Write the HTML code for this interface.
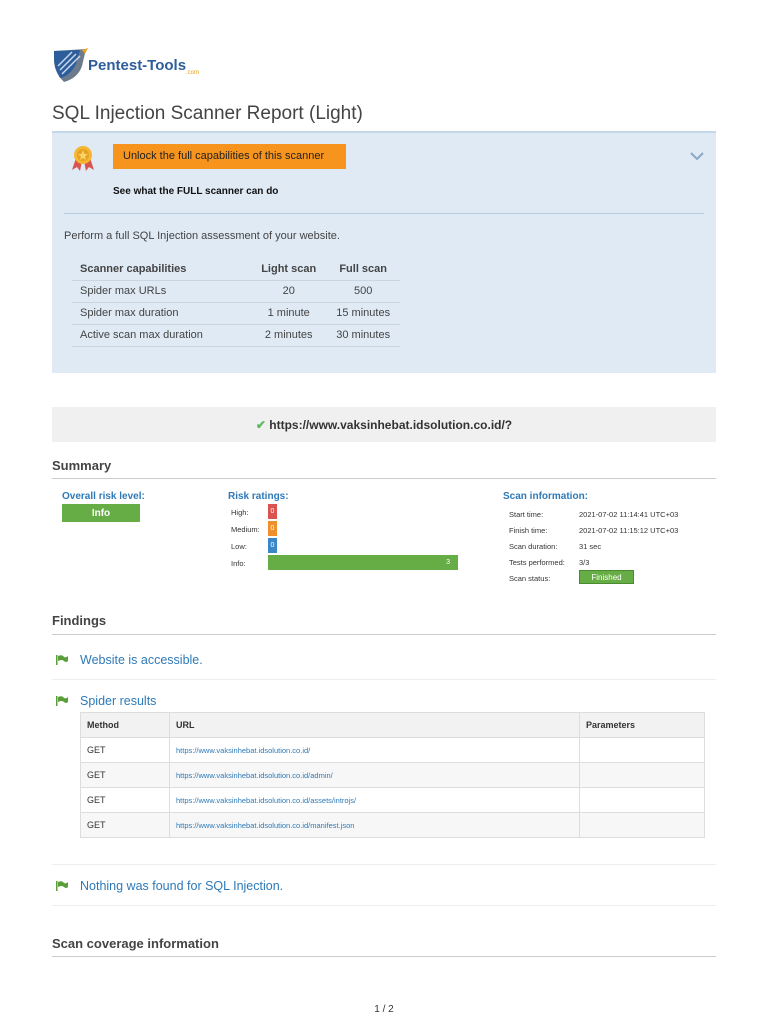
<!DOCTYPE html>
<html><head><meta charset="utf-8"><style>
*{margin:0;padding:0;box-sizing:border-box}
body{width:768px;height:1024px;background:#fff;font-family:"Liberation Sans",sans-serif;color:#333;position:relative;overflow:hidden}
.a{position:absolute}
.blue{color:#2e7ab8}
table{border-collapse:collapse}
.cap td{font-size:11px;color:#444;height:22px;border-bottom:1px solid #c9d6e2;padding:0 0 0 0}
.sp td{border:1px solid #ddd;font-size:9px;height:25px;padding:0 6px}
.sp a{color:#2e7ab8;font-size:7.5px;text-decoration:none}
.h2{font-size:13px;font-weight:bold;color:#444}
.line{height:1px;background:#ccc}
.flag{width:12px;height:10px}
.si div{font-size:7.5px;height:16px;line-height:16px}
.bd{width:9px;height:15px;color:#fff;font-size:7px;line-height:15px;text-align:center}
</style></head><body>
<svg class="a" style="left:52px;top:48px" width="36" height="36" viewBox="0 0 36 36"><path d="M2 3 L34 1 L30 18 Q26 30 12 34 Q2 24 2 12Z" fill="#6b7b8c"/><path d="M2 3 L28 2 L24 16 Q18 28 8 30 Q2 20 2 10Z" fill="#2d5d9a"/><path d="M8 22 L24 6 M10 26 L28 8 M6 18 L20 4" stroke="#c8d8ec" stroke-width="1.5"/><path d="M30 2 L36 0 L33 6Z" fill="#e8a020"/></svg>
<div class="a" style="left:88px;top:57px;font-size:15px;font-weight:bold;color:#2d5d9a">Pentest-Tools</div>
<div class="a" style="left:186px;top:70px;font-size:6px;color:#e8a020">.com</div>
<div class="a" style="left:52px;top:103px;font-size:19px;color:#444">SQL Injection Scanner Report (Light)</div>
<div class="a" style="left:52px;top:131px;width:664px;height:242px;background:#dfeaf5;border-top:2px solid #c4d8ea"></div>
<svg class="a" style="left:70px;top:144px" width="26" height="28" viewBox="0 0 26 28"><path d="M6 14 L2 26 L7 23 L10 27 L12 17Z M20 14 L24 26 L19 23 L16 27 L14 17Z" fill="#d9534f"/><circle cx="13" cy="11" r="9" fill="#f5b731"/><circle cx="13" cy="11" r="6" fill="#e8a020"/><path d="M13 6 L14.5 10 L18 10 L15 12.5 L16 16 L13 14 L10 16 L11 12.5 L8 10 L11.5 10Z" fill="#f7d56a"/></svg>
<div class="a" style="left:113px;top:144px;width:233px;height:25px;background:#f6941d;font-size:11px;color:#222;line-height:25px;padding-left:10px">Unlock the full capabilities of this scanner</div>
<div class="a" style="left:113px;top:186px;font-size:10px;font-weight:bold;color:#111">See what the FULL scanner can do</div>
<svg class="a" style="left:690px;top:151px" width="14" height="10"><path d="M1 2 L7 8 L13 2" stroke="#8aa8c4" stroke-width="2" fill="none"/></svg>
<div class="a" style="left:64px;top:213px;width:640px;height:1px;background:#b8cde0"></div>
<div class="a" style="left:64px;top:230px;font-size:11px;color:#444">Perform a full SQL Injection assessment of your website.</div>
<table class="a cap" style="left:72px;top:258px;width:328px">
<tr><td style="font-weight:bold;padding-left:8px">Scanner capabilities</td><td style="font-weight:bold;text-align:center">Light scan</td><td style="font-weight:bold;text-align:center">Full scan</td></tr>
<tr><td style="padding-left:8px">Spider max URLs</td><td style="text-align:center">20</td><td style="text-align:center">500</td></tr>
<tr><td style="padding-left:8px">Spider max duration</td><td style="text-align:center">1 minute</td><td style="text-align:center">15 minutes</td></tr>
<tr><td style="padding-left:8px">Active scan max duration</td><td style="text-align:center">2 minutes</td><td style="text-align:center">30 minutes</td></tr>
</table>
<div class="a" style="left:52px;top:407px;width:664px;height:35px;background:#f0f0f0;text-align:center;line-height:37px;font-size:12px;font-weight:bold;color:#333"><span style="color:#5cb85c">✔</span> https://www.vaksinhebat.idsolution.co.id/?</div>
<div class="a h2" style="left:52px;top:458px">Summary</div>
<div class="a line" style="left:52px;top:478px;width:664px"></div>
<div class="a blue" style="left:62px;top:491px;font-size:10px;font-weight:bold">Overall risk level:</div>
<div class="a" style="left:62px;top:504px;width:78px;height:18px;background:#67ad45;color:#fff;font-size:10px;font-weight:bold;text-align:center;line-height:19px">Info</div>
<div class="a blue" style="left:228px;top:491px;font-size:10px;font-weight:bold">Risk ratings:</div>
<div class="a" style="left:231px;top:508px;font-size:7.5px">High:</div>
<div class="a" style="left:231px;top:525px;font-size:7.5px">Medium:</div>
<div class="a" style="left:231px;top:542px;font-size:7.5px">Low:</div>
<div class="a" style="left:231px;top:559px;font-size:7.5px">Info:</div>
<div class="a bd" style="left:268px;top:504px;background:#d9534f">0</div>
<div class="a bd" style="left:268px;top:521px;background:#f0902a">0</div>
<div class="a bd" style="left:268px;top:538px;background:#3a87c8">0</div>
<div class="a" style="left:268px;top:555px;width:190px;height:15px;background:#67ad45;color:#fff;font-size:7px;line-height:15px;padding:0 8px;text-align:right">3</div>
<div class="a blue" style="left:503px;top:491px;font-size:10px;font-weight:bold">Scan information:</div>
<div class="a si" style="left:509px;top:507px"><div>Start time:</div><div>Finish time:</div><div>Scan duration:</div><div>Tests performed:</div><div>Scan status:</div></div>
<div class="a si" style="left:579px;top:507px"><div>2021-07-02 11:14:41 UTC+03</div><div>2021-07-02 11:15:12 UTC+03</div><div>31 sec</div><div>3/3</div></div>
<div class="a" style="left:579px;top:570px;width:55px;height:14px;background:#67ad45;border:1px solid #4a8a30;color:#fff;font-size:8px;text-align:center;line-height:13px">Finished</div>
<div class="a h2" style="left:52px;top:613px">Findings</div>
<div class="a line" style="left:52px;top:634px;width:664px"></div>
<svg class="a flag" style="left:56px;top:655px" viewBox="0 0 12 10"><rect x="0" y="0" width="1.5" height="10" fill="#5a9e3a"/><path d="M2 1 Q6 -1 8 2 Q10 3 12 1 L12 6 Q10 8 8 6 Q6 4 2 6Z" fill="#5a9e3a"/></svg>
<div class="a blue" style="left:80px;top:653px;font-size:12.5px">Website is accessible.</div>
<div class="a" style="left:52px;top:679px;width:664px;height:1px;background:#eee"></div>
<svg class="a flag" style="left:56px;top:696px" viewBox="0 0 12 10"><rect x="0" y="0" width="1.5" height="10" fill="#5a9e3a"/><path d="M2 1 Q6 -1 8 2 Q10 3 12 1 L12 6 Q10 8 8 6 Q6 4 2 6Z" fill="#5a9e3a"/></svg>
<div class="a blue" style="left:80px;top:694px;font-size:12.5px">Spider results</div>
<table class="a sp" style="left:80px;top:712px;width:625px">
<tr style="background:#f2f2f2"><td style="width:89px;font-weight:bold">Method</td><td style="font-weight:bold">URL</td><td style="width:125px;font-weight:bold">Parameters</td></tr>
<tr><td>GET</td><td><a>https://www.vaksinhebat.idsolution.co.id/</a></td><td></td></tr>
<tr style="background:#f7f7f7"><td>GET</td><td><a>https://www.vaksinhebat.idsolution.co.id/admin/</a></td><td></td></tr>
<tr><td>GET</td><td><a>https://www.vaksinhebat.idsolution.co.id/assets/introjs/</a></td><td></td></tr>
<tr style="background:#f7f7f7"><td>GET</td><td><a>https://www.vaksinhebat.idsolution.co.id/manifest.json</a></td><td></td></tr>
</table>
<div class="a" style="left:52px;top:864px;width:664px;height:1px;background:#eee"></div>
<svg class="a flag" style="left:56px;top:881px" viewBox="0 0 12 10"><rect x="0" y="0" width="1.5" height="10" fill="#5a9e3a"/><path d="M2 1 Q6 -1 8 2 Q10 3 12 1 L12 6 Q10 8 8 6 Q6 4 2 6Z" fill="#5a9e3a"/></svg>
<div class="a blue" style="left:80px;top:879px;font-size:12.5px">Nothing was found for SQL Injection.</div>
<div class="a" style="left:52px;top:905px;width:664px;height:1px;background:#eee"></div>
<div class="a h2" style="left:52px;top:936px">Scan coverage information</div>
<div class="a line" style="left:52px;top:956px;width:664px"></div>
<div class="a" style="left:0;top:1004px;width:768px;text-align:center;font-size:10px;color:#333">1 / 2</div>
</body></html>
